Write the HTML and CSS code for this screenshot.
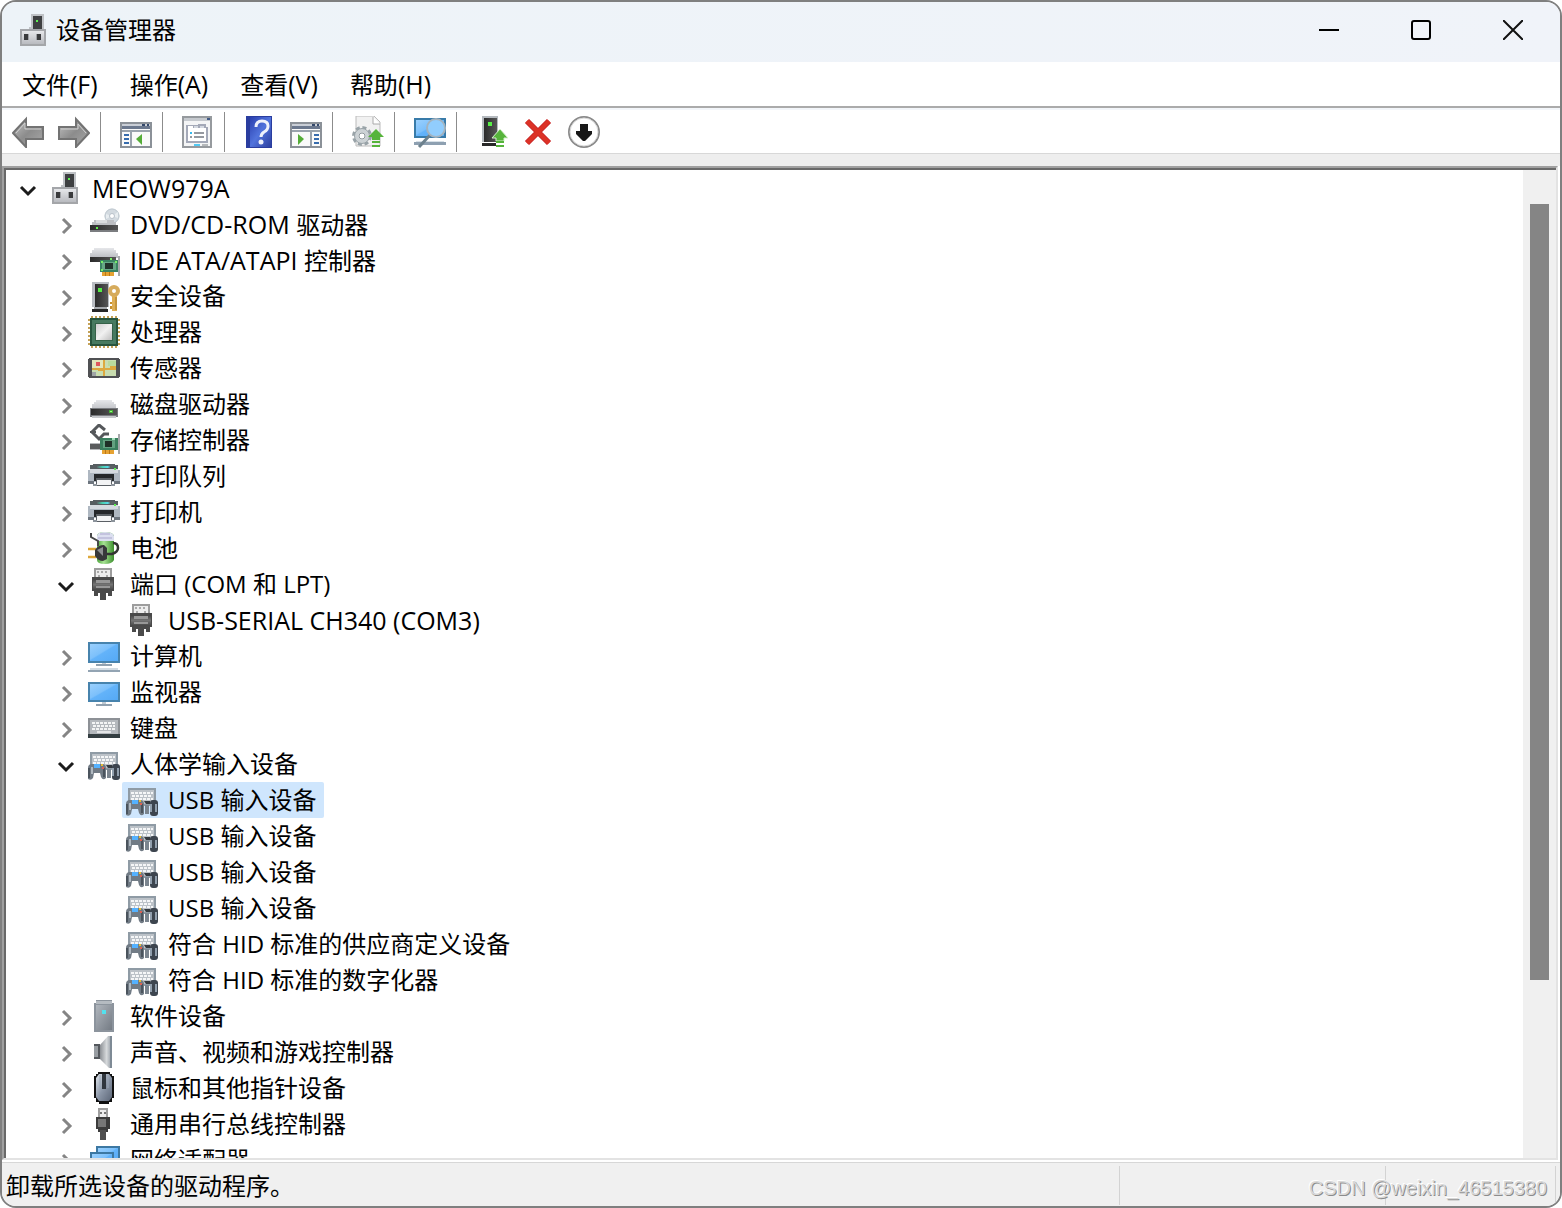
FILE: index.html
```html
<!DOCTYPE html>
<html lang="zh-CN">
<head>
<meta charset="utf-8">
<meta name="viewport" content="width=device-width, initial-scale=1">
<title>设备管理器</title>
<link rel="stylesheet" href="styles.css">
</head>
<body>
<svg class="sprite" aria-hidden="true">
  <defs>
    <linearGradient id="metal" x1="0" y1="0" x2="0" y2="1"><stop offset="0" stop-color="#e6e7ea"/><stop offset="1" stop-color="#b9bbc0"/></linearGradient>
    <linearGradient id="dark" x1="0" y1="0" x2="1" y2="0"><stop offset="0" stop-color="#2b2b2b"/><stop offset="1" stop-color="#565656"/></linearGradient>
    <linearGradient id="screen" x1="0" y1="0" x2="1" y2="1"><stop offset="0" stop-color="#9ad0fd"/><stop offset=".45" stop-color="#7cc0fb"/><stop offset=".5" stop-color="#63b3fa"/><stop offset="1" stop-color="#55a9f5"/></linearGradient>
    <linearGradient id="arrow" x1="0" y1="0" x2="1" y2="1"><stop offset="0" stop-color="#c4c4c4"/><stop offset=".5" stop-color="#8c8c8c"/><stop offset="1" stop-color="#a9a9a9"/></linearGradient>
    <linearGradient id="helpblue" x1="0" y1="0" x2="1" y2="1"><stop offset="0" stop-color="#2a3fae"/><stop offset=".5" stop-color="#5173dc"/><stop offset="1" stop-color="#2c3f9f"/></linearGradient>
    <linearGradient id="die" x1="0" y1="0" x2="1" y2="1"><stop offset="0" stop-color="#cfcfcf"/><stop offset=".5" stop-color="#f1f1f1"/><stop offset="1" stop-color="#bdbdbd"/></linearGradient>
    <linearGradient id="plug" x1="0" y1="0" x2="0" y2="1"><stop offset="0" stop-color="#444"/><stop offset=".5" stop-color="#747474"/><stop offset="1" stop-color="#454545"/></linearGradient>
    <linearGradient id="steel" x1="0" y1="0" x2="1" y2="1"><stop offset="0" stop-color="#b0b6bd"/><stop offset="1" stop-color="#747b84"/></linearGradient>
    <linearGradient id="cone" x1="0" y1="0" x2="1" y2="0"><stop offset="0" stop-color="#8c9095"/><stop offset=".55" stop-color="#d7dadc"/><stop offset="1" stop-color="#8d969f"/></linearGradient>
    <linearGradient id="mouseg" x1="0" y1="0" x2="1" y2="1"><stop offset="0" stop-color="#e1e7ee"/><stop offset=".5" stop-color="#8b96a7"/><stop offset="1" stop-color="#5c6677"/></linearGradient>
    <linearGradient id="lid" x1="0" y1="0" x2="1" y2="0"><stop offset="0" stop-color="#5c6668"/><stop offset=".3" stop-color="#48cfae"/><stop offset=".6" stop-color="#56d8e8"/><stop offset=".75" stop-color="#5b6264"/></linearGradient>
    <linearGradient id="cell" x1="0" y1="0" x2="1" y2="0"><stop offset="0" stop-color="#4da63b"/><stop offset=".4" stop-color="#a7e294"/><stop offset="1" stop-color="#3c8f2d"/></linearGradient>
  </defs>

  <symbol id="i-pc" viewBox="0 0 32 32"><g shape-rendering="crispEdges">
    <path d="M13 0h13v16H11v-3h2z" fill="#bfc2c6"/><path d="M15 2h9v13h-9z" fill="#3e4042"/><path d="M18 6h2v2h-2z" fill="#5df052"/>
    <path d="M2 15h26v17H2z" fill="#a4a6aa"/><path d="M4 17h22v13H4z" fill="url(#metal)"/><path d="M2 30h26v2H2z" fill="#a4a6a9"/>
    <path d="M6 20h4v6H6zM19 20h4v6h-4z" fill="#3a3b3d"/><path d="M10 20h1v6h-1zM18 20h1v6h-1z" fill="#9fa1a5"/></g></symbol>

  <symbol id="i-dvd" viewBox="0 0 32 32">
    <circle cx="24" cy="8" r="7.5" fill="#d3dae0"/><circle cx="24" cy="8" r="7" fill="none" stroke="#c1cad1"/><path d="M24 8l6-4v6zM24 8l-6-2v5z" fill="#e8edf0"/><circle cx="24" cy="8" r="2.5" fill="#fff" stroke="#b8c1c9"/>
    <g shape-rendering="crispEdges"><path d="M6 12h20v2h2v3h2v1H2v-1h2v-3h2z" fill="#bdbfc3"/><path d="M8 12h11v3H8z" fill="#d9dbdd"/><path d="M2 17h28v7H2z" fill="url(#dark)"/><path d="M2 22h28v2H2z" fill="#7b7d80"/><path d="M8 19h2v2H8z" fill="#62f04c"/></g></symbol>

  <symbol id="i-ide" viewBox="0 0 32 32"><g shape-rendering="crispEdges">
    <path d="M6 4h20v2h2v3h2v5H2V9h2V6h2z" fill="url(#metal)"/><path d="M2 13h26v5H2z" fill="url(#dark)"/>
    <path d="M12 16h18v12H12z" fill="#3b8462"/><path d="M14 18h14v8H14z" fill="#66a886"/><path d="M17 19h8v6h-8z" fill="#21332b"/><path d="M13 17h2v2h-2zM27 17h2v2h-2zM13 25h2v2h-2zM22 14h2v2h-2z" fill="#77ee65"/>
    <path d="M14 28h12v4H14z" fill="#e6a232"/><path d="M17 28h1v4h-1zM21 28h1v4h-1z" fill="#bd7815"/><path d="M30 12h2v20h-2z" fill="#a6a8ab"/></g></symbol>

  <symbol id="i-key" viewBox="0 0 32 32"><g shape-rendering="crispEdges">
    <path d="M4 2h17v25H4z" fill="#b9bdc2"/><path d="M7 4h13v23H7z" fill="url(#dark)"/><path d="M10 8h4v4h-4z" fill="#54ec44"/><path d="M4 29h16v3H4z" fill="#272727"/><path d="M6 27h13v2H6z" fill="#a7aaae"/></g>
    <circle cx="26" cy="11" r="4" fill="none" stroke="#d6ab5c" stroke-width="4"/><path d="M24 16h5v15h-5z" fill="#dfaf55"/><path d="M28 17v13" stroke="#a87b27"/><path d="M22 22h2v2h-2zM22 26h2v3h-2z" fill="#c6902d"/></symbol>

  <symbol id="i-cpu" viewBox="0 0 32 32">
    <path d="M3 1h28M3 31h28" stroke="#c5a258" stroke-width="2" stroke-dasharray="2 2"/><path d="M1 3v28M31 3v28" stroke="#c5a258" stroke-width="2" stroke-dasharray="2 2"/>
    <g shape-rendering="crispEdges"><path d="M2 2h28v28H2z" fill="#27543d"/><path d="M4 4h24v24H4z" fill="#477a60"/><path d="M7 7h18v18H7z" fill="#356248"/><path d="M8 8h16v16H8z" fill="url(#die)"/></g></symbol>

  <symbol id="i-sensor" viewBox="0 0 32 32"><g shape-rendering="crispEdges">
    <path d="M1 6h30v20H1zM0 7h32v18H0z" fill="#505154"/><path d="M4 8h24v16H4z" fill="#c9ddb0"/><path d="M4 8h12v8H4z" fill="#e3e8bb"/><path d="M15 8h2v16h-2zM4 16h24v2H4zM22 14h6v2h-6zM10 18h6v1h-6z" fill="#dda93f"/><path d="M8 10h4v4H8z" fill="#df5a5e"/><path d="M4 20h4v4H4z" fill="#a0a5a6"/><path d="M20 9h8v5h-8z" fill="#b9da9d"/></g></symbol>

  <symbol id="i-disk" viewBox="0 0 32 32"><g shape-rendering="crispEdges">
    <path d="M8 12h16v2h2v2h2v4h2v3H2v-3h2v-4h2v-2h2z" fill="url(#metal)"/><path d="M2 20h28v9H2z" fill="#797b7f"/><path d="M3 21h26v6H3z" fill="url(#dark)"/><path d="M21 22h4v3h-4z" fill="#44ad36"/><path d="M22 23h2v1h-2z" fill="#9bff7f"/><path d="M4 28h24v2H4z" fill="#c5c7ca"/></g></symbol>

  <symbol id="i-storage" viewBox="0 0 32 32"><g shape-rendering="crispEdges">
    <path d="M2 19h10v7H2z" fill="#b6b8bb"/><path d="M2 20h10v5H2z" fill="#5a5b5d"/></g>
    <path d="M17 6l-6-5-7 7 7 7 5-5h5" fill="none" stroke="#55585b" stroke-width="3"/><path d="M2 8h6" stroke="#55585b" stroke-width="2"/>
    <g shape-rendering="crispEdges"><path d="M12 14h18v12H12z" fill="#3a7f5e"/><path d="M15 16h12v8H15z" fill="#62a180"/><path d="M17 17h7v6h-7z" fill="#1f3027"/><path d="M24 14h3v2h-3z" fill="#a3dfbb"/><path d="M14 26h12v4H14z" fill="#e6a232"/><path d="M17 26h1v4h-1zM21 26h1v4h-1z" fill="#bd7815"/><path d="M30 10h2v20h-2z" fill="#a6a8ab"/></g></symbol>

  <symbol id="i-printer" viewBox="0 0 32 32"><g shape-rendering="crispEdges">
    <path d="M5 4h22v1h3v6H2V5h3z" fill="#565d61"/><path d="M9 6h18v2H9z" fill="url(#lid)"/><path d="M0 10h32v12H0z" fill="#aeb7c1"/><path d="M2 9h28v4H2z" fill="#d5dae0"/><path d="M26 8h2v2h-2z" fill="#5df052"/>
    <path d="M6 14h20v7H6z" fill="#25282b"/><path d="M8 18h16v8H8z" fill="#5b6065"/><path d="M9 20h14v5H9z" fill="#f3f4f5"/><path d="M0 21h6v3H0zM26 21h6v3h-6z" fill="#6d757e"/><path d="M5 24h4v2H5zM23 24h4v2h-4z" fill="#8c939b"/></g></symbol>

  <symbol id="i-battery" viewBox="0 0 32 32">
    <path d="M9 4q0-4 8-4t9 4v24q-2 4-9 4-8 0-8-4z" fill="url(#cell)"/><path d="M9 4q0-4 8-4t9 4v5H9z" fill="#dcdff0"/><path d="M12 2h10M10 6h14" stroke="#aaa7cc"/>
    <path d="M0 17h8M0 25h8" stroke="#dda73b" stroke-width="2.5"/><path d="M7 18q3-5 9-5l3 3v11l-4 2q-5 0-8-5z" fill="#37383a"/><path d="M9 18l6-3v9z" fill="#8d8f92"/><path d="M19 22h5q6-2 6-6 0-5-5-5" fill="none" stroke="#333" stroke-width="2.5"/><path d="M10 14V9L3 5V1" fill="none" stroke="#484848" stroke-width="2"/></symbol>

  <symbol id="i-port" viewBox="0 0 32 32"><g shape-rendering="crispEdges">
    <path d="M6 0h18v10H6z" fill="#9d9d9d"/><path d="M8 2h14v8H8z" fill="#ededed"/><path d="M9 3h2v2H9zM13 3h2v2h-2zM17 3h2v2h-2zM10 7h2v2h-2zM18 7h2v2h-2z" fill="#aaa"/>
    <path d="M4 9h22v14H4z" fill="#4a4a4a"/><path d="M5 11h20v11H5z" fill="url(#plug)"/><path d="M8 12h14v3H8zM8 18h14v2H8z" fill="#989898"/><path d="M8 22h14v3H8zM6 23h4v5H6zM20 23h4v5h-4zM12 24h6v8h-6z" fill="#4a4a4a"/></g></symbol>

  <symbol id="i-computer" viewBox="0 0 32 32"><g shape-rendering="crispEdges">
    <path d="M0 2h32v21H0z" fill="#4783ad"/><path d="M2 4h28v17H2z" fill="url(#screen)"/><path d="M14 23h4v2h-4z" fill="#c2cbd2"/><path d="M8 24h16v2H8z" fill="#91a1af"/><path d="M2 28h28v2H2z" fill="#d3dce3"/><path d="M0 30h32v2H0z" fill="#93a4b3"/></g></symbol>

  <symbol id="i-monitor" viewBox="0 0 32 32"><g shape-rendering="crispEdges">
    <path d="M0 6h32v20H0z" fill="#4783ad"/><path d="M2 8h28v16H2z" fill="url(#screen)"/><path d="M14 26h4v2h-4z" fill="#c2cbd2"/><path d="M8 28h16v2H8z" fill="#91a1af"/></g></symbol>

  <symbol id="i-keyboard" viewBox="0 0 32 32">
    <g shape-rendering="crispEdges"><path d="M0 6h32v17H0z" fill="#8d9196"/><path d="M2 8h28v14H2z" fill="#b4b8bd"/><path d="M0 22h32v4H0z" fill="#343e42"/></g>
    <path d="M4 11h24M5 14h22M4 17h24" stroke="#f3f4f5" stroke-width="2" stroke-dasharray="3 1"/><path d="M9 20h14" stroke="#e5e6e8" stroke-width="2"/></symbol>

  <symbol id="i-hid" viewBox="0 0 32 32">
    <g shape-rendering="crispEdges"><path d="M2 4h28v18H2z" fill="#8f9ba5"/><path d="M4 6h24v14H4z" fill="#bcc2c8"/></g>
    <path d="M5 9h22M6 12h20M5 15h22" stroke="#f5f6f7" stroke-width="2" stroke-dasharray="3 1"/>
    <path d="M0 20q0-4 4-4h10q4 0 4 4v10q-3 3-5-1l-1-4H6l-1 5q-2 3-5 1z" fill="#717b85"/><path d="M0 20h2v10H0zM15 20h2v9h-2z" fill="#4b545d"/><path d="M3 19h2v7H3z" fill="#b0b9c1"/><path d="M6 16h6v4H6z" fill="#55b2ff"/><path d="M13 16h2v2h-2z" fill="#e7bd36"/><path d="M14 19h2v2h-2z" fill="#dc6154"/>
    <path d="M18 17h6v3h-4z" fill="#353a3f"/><path d="M19 21h4v9h-4z" fill="#7b858f"/><rect x="24" y="16" width="8" height="16" rx="3" fill="#3d454f"/><path d="M25 20v8M30 20v8" stroke="#92a0ae" stroke-width="2"/></symbol>

  <symbol id="i-software" viewBox="0 0 32 32"><g shape-rendering="crispEdges">
    <path d="M8 0h16v3h2v29H6V3h2z" fill="#8c949d"/><path d="M8 1h16v3H8z" fill="#b5bbc1"/><path d="M8 5h16v25H8z" fill="url(#steel)"/><path d="M14 10h4v4h-4z" fill="#53e1ee"/></g></symbol>

  <symbol id="i-sound" viewBox="0 0 32 32">
    <path d="M20 0h4v32h-3L12 23V9z" fill="url(#cone)"/><path d="M6 8h6v15H6z" fill="#54585d"/><path d="M6 10h4v11H6z" fill="#989da2"/><path d="M22 0h2v32h-2z" fill="#7e8a95"/></symbol>

  <symbol id="i-mouse" viewBox="0 0 32 32">
    <path d="M10 0h12v2h2v2h2v22h-2v4h-3v2H11v-2H8v-4H6V4h2V2h2z" fill="#111"/><path d="M11 2h10l3 4v19l-3 4H11l-3-4V6z" fill="url(#mouseg)"/><path d="M14 2h4v15h-4z" fill="#2f353d"/><path d="M12 3v13M20 3v13" stroke="#9aa6b6" stroke-width="1"/></symbol>

  <symbol id="i-usb" viewBox="0 0 32 32"><g shape-rendering="crispEdges">
    <path d="M10 0h10v10H10z" fill="#9f9f9f"/><path d="M12 2h6v8h-6z" fill="#ededed"/><path d="M12 4h2v2h-2zM16 4h2v2h-2z" fill="#777"/><path d="M8 9h14v12h-2v3H10v-3H8z" fill="#3c3c3c"/><path d="M10 11h8v8h-8z" fill="#777"/><path d="M12 22h6v10h-6z" fill="#4f4f4f"/></g></symbol>

  <symbol id="i-network" viewBox="0 0 32 32"><g shape-rendering="crispEdges">
    <path d="M8 2h24v18H8z" fill="#3d78a2"/><path d="M10 4h20v14H10z" fill="url(#screen)"/><path d="M2 8h24v18H2z" fill="#3d78a2"/><path d="M4 10h20v14H4z" fill="url(#screen)"/></g></symbol>

  <symbol id="t-back" viewBox="0 0 32 32"><path d="M1 17L14 3v8h17v12H14v8z" fill="url(#arrow)" stroke="#737373" stroke-width="2"/><path d="M4 17l9-10v6h16" fill="none" stroke="#d0d0d0" stroke-width="1"/></symbol>
  <symbol id="t-forward" viewBox="0 0 32 32"><path d="M31 17L18 3v8H1v12h17v8z" fill="url(#arrow)" stroke="#737373" stroke-width="2"/><path d="M3 13h17V8l8 9" fill="none" stroke="#d0d0d0" stroke-width="1"/></symbol>
  <symbol id="t-tree" viewBox="0 0 32 32"><g shape-rendering="crispEdges"><path d="M0 6h32v26H0z" fill="#8b9198"/><path d="M2 8h28v22H2z" fill="#fafafa"/><path d="M2 8h28v2H2z" fill="#c9ced6"/><path d="M2 10h28v3H2z" fill="#6b788e"/><path d="M22 8h3v2h-3zM27 8h2v2h-2z" fill="#34486b"/><path d="M2 14h28v2H2zM10 16h2v14h-2z" fill="#9aa3ad"/><path d="M4 18h5v2H4zM4 22h5v2H4zM4 26h5v2H4z" fill="#386dae"/></g><path d="M22 18v11l-6-6z" fill="#55ad38"/></symbol>
  <symbol id="t-action" viewBox="0 0 32 32"><g shape-rendering="crispEdges"><path d="M0 6h32v26H0z" fill="#8b9198"/><path d="M2 8h28v22H2z" fill="#fafafa"/><path d="M2 8h28v2H2z" fill="#c9ced6"/><path d="M2 10h28v3H2z" fill="#6b788e"/><path d="M22 8h3v2h-3zM27 8h2v2h-2z" fill="#34486b"/><path d="M2 14h28v2H2zM20 16h2v14h-2z" fill="#9aa3ad"/><path d="M24 18h5v2h-5zM24 22h5v2h-5zM24 26h5v2h-5z" fill="#386dae"/></g><path d="M8 18v11l6-6z" fill="#55ad38"/></symbol>
  <symbol id="t-props" viewBox="1 0 32 32"><g shape-rendering="crispEdges"><path d="M1 0h30v32H1z" fill="#969a9e"/><path d="M3 2h26v28H3z" fill="#f4f5f6"/><path d="M3 2h26v3H3z" fill="#c6cacf"/><path d="M26 2h3v2h-3z" fill="#405984"/><path d="M5 9h12V8h8v3h2v16H5z" fill="#a4a9b8"/><path d="M7 12h18v13H7zM7 10h5v2H7z" fill="#fff"/><path d="M13 10h4v2h-4zM19 10h4v2h-4z" fill="#d5dae2"/><path d="M9 16h2v2H9z" fill="#35b9ee"/><path d="M13 16h10v2H13zM13 20h10v2H13zM9 20h2v2H9z" fill="#9599a0"/><path d="M13 28h6v2h-6z" fill="#53c8f2"/><path d="M21 28h6v2h-6z" fill="#b6b9bc"/></g></symbol>
  <symbol id="t-help" viewBox="0 0 32 32"><path d="M2 0h26v32H2z" fill="#2a3d9f"/><path d="M6 1h21v30H6z" fill="url(#helpblue)"/><path d="M12 11q0-6 6-6t6 5q0 4-4 6-3 2-3 5" fill="none" stroke="#eef1fb" stroke-width="3"/><circle cx="17" cy="26" r="2.5" fill="#eef1fb"/></symbol>
  <symbol id="t-update" viewBox="0 0 32 32"><path d="M4 0h18l6 6v24H4z" fill="#f1f1f1" stroke="#bbb"/><path d="M21 1v7h7" fill="#fff" stroke="#aaa"/><circle cx="10" cy="20" r="8.5" fill="none" stroke="#99a3a8" stroke-width="3" stroke-dasharray="4 2.7"/><circle cx="10" cy="20" r="5.5" fill="#e7eaeb" stroke="#ccd2d5" stroke-width="4"/><circle cx="10" cy="20" r="7.5" fill="none" stroke="#99a3a8"/><circle cx="10" cy="20" r="3" fill="#fff" stroke="#8e979c"/><path d="M24 13l8 8h-4v3h-8v-3h-4z" fill="#56b43b"/><path d="M20 25h8v2h-8zM20 29h8v2h-8z" fill="#56b43b"/></symbol>
  <symbol id="t-scan" viewBox="0 0 32 32"><path d="M0 2h32v20H0z" fill="#387ba9"/><path d="M2 4h28v16H2z" fill="url(#screen)"/><path d="M0 26h32v3H0z" fill="#8ea0b1"/><path d="M2 25h28v1H2z" fill="#d7e0e7"/><path d="M5 31l11-12" stroke="#6d818d" stroke-width="3"/><circle cx="22" cy="12" r="9" fill="#91cdfd" stroke="#a3b3bf" stroke-width="2"/></symbol>
  <symbol id="t-enable" viewBox="0 0 32 32"><path d="M6 0h16v26H6z" fill="#b5babf"/><path d="M8 2h13v24H8z" fill="url(#dark)"/><path d="M12 6h4v4h-4z" fill="#58ef46"/><path d="M6 27h14v3H6z" fill="#282828"/><path d="M24 13l8 9h-4v3h-8v-3h-4z" fill="#56b43b" stroke="#d7f0cf" stroke-width="1"/><path d="M20 25h8v2h-8zM20 29h8v2h-8z" fill="#56b43b"/></symbol>
  <symbol id="t-remove" viewBox="0 0 32 32"><path d="M5 5l22 22M27 5L5 27" stroke="#c9272a" stroke-width="6"/><path d="M5 5l22 22M27 5L5 27" stroke="#dc3226" stroke-width="4"/></symbol>
  <symbol id="t-disable" viewBox="0 0 32 32"><circle cx="16" cy="16" r="15" fill="#fff" stroke="#8a8a8a" stroke-width="2"/><circle cx="16" cy="16" r="14" fill="none" stroke="#d9d9d9"/><path d="M12 8h8v7h4v3l-7 7h-2l-7-7v-3h4z" fill="#181818"/></symbol>
  <symbol id="c-closed" viewBox="0 0 18 18"><path d="M6 2l7 7-7 7" fill="none" stroke="#858585" stroke-width="3"/></symbol>
  <symbol id="c-open" viewBox="0 0 18 18"><path d="M2 6l7 7 7-7" fill="none" stroke="#1c1c1c" stroke-width="3"/></symbol>
</svg>

<main class="window">
  <header class="titlebar">
    <svg class="icon"><use href="#i-pc"/></svg>
    <h1 class="title">设备管理器</h1>
    <div class="controls">
      <button type="button" aria-label="最小化"><svg viewBox="0 0 20 20"><path d="M0 10h20" stroke="#000" stroke-width="2"/></svg></button>
      <button type="button" aria-label="最大化"><svg viewBox="0 0 20 20"><rect x="1" y="1" width="18" height="18" rx="2" fill="none" stroke="#000" stroke-width="2"/></svg></button>
      <button type="button" aria-label="关闭"><svg viewBox="0 0 20 20"><path d="M0 0l20 20M20 0L0 20" stroke="#111" stroke-width="2"/></svg></button>
    </div>
  </header>

  <nav class="menubar">
    <button type="button">文件<span class="latin">(F)</span></button>
    <button type="button">操作<span class="latin">(A)</span></button>
    <button type="button">查看<span class="latin">(V)</span></button>
    <button type="button">帮助<span class="latin">(H)</span></button>
  </nav>

  <div class="toolbar">
    <button type="button" aria-label="后退"><svg class="icon"><use href="#t-back"/></svg></button>
    <button type="button" aria-label="前进"><svg class="icon"><use href="#t-forward"/></svg></button>
    <span class="sep"></span>
    <button type="button" aria-label="显示控制台树"><svg class="icon"><use href="#t-tree"/></svg></button>
    <span class="sep"></span>
    <button type="button" aria-label="属性"><svg class="icon"><use href="#t-props"/></svg></button>
    <span class="sep"></span>
    <button type="button" aria-label="帮助"><svg class="icon"><use href="#t-help"/></svg></button>
    <button type="button" aria-label="显示操作窗格"><svg class="icon"><use href="#t-action"/></svg></button>
    <span class="sep"></span>
    <button type="button" aria-label="更新驱动程序"><svg class="icon"><use href="#t-update"/></svg></button>
    <span class="sep"></span>
    <button type="button" aria-label="扫描检测硬件改动"><svg class="icon"><use href="#t-scan"/></svg></button>
    <span class="sep"></span>
    <button type="button" aria-label="启用设备"><svg class="icon"><use href="#t-enable"/></svg></button>
    <button type="button" aria-label="卸载设备"><svg class="icon"><use href="#t-remove"/></svg></button>
    <button type="button" aria-label="禁用设备"><svg class="icon"><use href="#t-disable"/></svg></button>
  </div>

  <section class="panel">
    <ul class="tree">
      <li>
        <div class="row"><button type="button" class="toggle" aria-label="折叠"><svg><use href="#c-open"/></svg></button><span class="entry"><svg class="icon"><use href="#i-pc"/></svg><span class="latin">MEOW979A</span></span></div>
        <ul>
          <li><div class="row"><button type="button" class="toggle" aria-label="展开"><svg><use href="#c-closed"/></svg></button><span class="entry"><svg class="icon"><use href="#i-dvd"/></svg><span><span class="latin">DVD/CD-ROM </span>驱动器</span></span></div></li>
          <li><div class="row"><button type="button" class="toggle" aria-label="展开"><svg><use href="#c-closed"/></svg></button><span class="entry"><svg class="icon"><use href="#i-ide"/></svg><span><span class="latin">IDE ATA/ATAPI </span>控制器</span></span></div></li>
          <li><div class="row"><button type="button" class="toggle" aria-label="展开"><svg><use href="#c-closed"/></svg></button><span class="entry"><svg class="icon"><use href="#i-key"/></svg>安全设备</span></div></li>
          <li><div class="row"><button type="button" class="toggle" aria-label="展开"><svg><use href="#c-closed"/></svg></button><span class="entry"><svg class="icon"><use href="#i-cpu"/></svg>处理器</span></div></li>
          <li><div class="row"><button type="button" class="toggle" aria-label="展开"><svg><use href="#c-closed"/></svg></button><span class="entry"><svg class="icon"><use href="#i-sensor"/></svg>传感器</span></div></li>
          <li><div class="row"><button type="button" class="toggle" aria-label="展开"><svg><use href="#c-closed"/></svg></button><span class="entry"><svg class="icon"><use href="#i-disk"/></svg>磁盘驱动器</span></div></li>
          <li><div class="row"><button type="button" class="toggle" aria-label="展开"><svg><use href="#c-closed"/></svg></button><span class="entry"><svg class="icon"><use href="#i-storage"/></svg>存储控制器</span></div></li>
          <li><div class="row"><button type="button" class="toggle" aria-label="展开"><svg><use href="#c-closed"/></svg></button><span class="entry"><svg class="icon"><use href="#i-printer"/></svg>打印队列</span></div></li>
          <li><div class="row"><button type="button" class="toggle" aria-label="展开"><svg><use href="#c-closed"/></svg></button><span class="entry"><svg class="icon"><use href="#i-printer"/></svg>打印机</span></div></li>
          <li><div class="row"><button type="button" class="toggle" aria-label="展开"><svg><use href="#c-closed"/></svg></button><span class="entry"><svg class="icon"><use href="#i-battery"/></svg>电池</span></div></li>
          <li>
            <div class="row"><button type="button" class="toggle" aria-label="折叠"><svg><use href="#c-open"/></svg></button><span class="entry"><svg class="icon"><use href="#i-port"/></svg>端口 (COM 和 LPT)</span></div>
            <ul>
              <li><div class="row leaf"><span class="entry"><svg class="icon"><use href="#i-port"/></svg><span class="latin">USB-SERIAL CH340 (COM3)</span></span></div></li>
            </ul>
          </li>
          <li><div class="row"><button type="button" class="toggle" aria-label="展开"><svg><use href="#c-closed"/></svg></button><span class="entry"><svg class="icon"><use href="#i-computer"/></svg>计算机</span></div></li>
          <li><div class="row"><button type="button" class="toggle" aria-label="展开"><svg><use href="#c-closed"/></svg></button><span class="entry"><svg class="icon"><use href="#i-monitor"/></svg>监视器</span></div></li>
          <li><div class="row"><button type="button" class="toggle" aria-label="展开"><svg><use href="#c-closed"/></svg></button><span class="entry"><svg class="icon"><use href="#i-keyboard"/></svg>键盘</span></div></li>
          <li>
            <div class="row"><button type="button" class="toggle" aria-label="折叠"><svg><use href="#c-open"/></svg></button><span class="entry"><svg class="icon"><use href="#i-hid"/></svg>人体学输入设备</span></div>
            <ul>
              <li><div class="row leaf"><span class="entry selected"><svg class="icon"><use href="#i-hid"/></svg>USB 输入设备</span></div></li>
              <li><div class="row leaf"><span class="entry"><svg class="icon"><use href="#i-hid"/></svg>USB 输入设备</span></div></li>
              <li><div class="row leaf"><span class="entry"><svg class="icon"><use href="#i-hid"/></svg>USB 输入设备</span></div></li>
              <li><div class="row leaf"><span class="entry"><svg class="icon"><use href="#i-hid"/></svg>USB 输入设备</span></div></li>
              <li><div class="row leaf"><span class="entry"><svg class="icon"><use href="#i-hid"/></svg>符合 HID 标准的供应商定义设备</span></div></li>
              <li><div class="row leaf"><span class="entry"><svg class="icon"><use href="#i-hid"/></svg>符合 HID 标准的数字化器</span></div></li>
            </ul>
          </li>
          <li><div class="row"><button type="button" class="toggle" aria-label="展开"><svg><use href="#c-closed"/></svg></button><span class="entry"><svg class="icon"><use href="#i-software"/></svg>软件设备</span></div></li>
          <li><div class="row"><button type="button" class="toggle" aria-label="展开"><svg><use href="#c-closed"/></svg></button><span class="entry"><svg class="icon"><use href="#i-sound"/></svg>声音、视频和游戏控制器</span></div></li>
          <li><div class="row"><button type="button" class="toggle" aria-label="展开"><svg><use href="#c-closed"/></svg></button><span class="entry"><svg class="icon"><use href="#i-mouse"/></svg>鼠标和其他指针设备</span></div></li>
          <li><div class="row"><button type="button" class="toggle" aria-label="展开"><svg><use href="#c-closed"/></svg></button><span class="entry"><svg class="icon"><use href="#i-usb"/></svg>通用串行总线控制器</span></div></li>
          <li><div class="row"><button type="button" class="toggle" aria-label="展开"><svg><use href="#c-closed"/></svg></button><span class="entry"><svg class="icon"><use href="#i-network"/></svg>网络适配器</span></div></li>
        </ul>
      </li>
    </ul>
    <div class="scrollbar"><div class="thumb"></div><div class="rest"></div></div>
  </section>

  <footer class="statusbar">
    <span class="cell message">卸载所选设备的驱动程序。</span>
    <span class="cell middle"></span>
    <span class="cell end"></span>
  </footer>
  <span class="watermark">CSDN @weixin_46515380</span>
</main>
</body>
</html>
```
FILE: styles.css
```css
* {
  box-sizing: border-box;
}

body {
  margin: 0;
  background: #fff;
  color: #000;
  font: 400 24px/36px "Open Sans", "Noto Sans CJK SC", sans-serif;
}

button {
  padding: 0;
  border: 0;
  background: none;
  color: inherit;
  font: inherit;
}

ul {
  margin: 0;
  padding: 0;
  list-style: none;
}

.sprite {
  position: absolute;
  width: 0;
  height: 0;
}

.icon {
  flex: none;
  display: block;
  width: 32px;
  height: 32px;
}

.latin {
  font-size: 25px;
}

.window {
  position: relative;
  display: flex;
  flex-direction: column;
  height: 100vh;
  overflow: hidden;
  border: 2px solid #7f7f7f;
  border-radius: 16px;
  background: #fff;
}

.titlebar {
  flex: none;
  display: flex;
  align-items: center;
  height: 60px;
  padding: 0 1px 4px 16px;
  background: linear-gradient(90deg, #edf3f8, #f0f3f9);
}

.title {
  flex: 1;
  margin: 0 0 0 6px;
  font-size: 24px;
  font-weight: inherit;
}

.controls {
  display: flex;
  align-self: stretch;
}

.controls button {
  display: grid;
  place-items: center;
  width: 92px;
}

.controls svg {
  width: 20px;
  height: 20px;
}

.menubar {
  flex: none;
  display: flex;
  height: 46px;
  padding: 0 4px;
  border-bottom: 2px solid #ababab;
}

.menubar button {
  padding: 0 16px;
}

.toolbar {
  flex: none;
  display: flex;
  margin-bottom: 12px;
  padding: 2px 3px 1px;
  border-top: 2px solid #f3f6fa;
  border-bottom: 1px solid #d8d8d8;
  box-shadow: 0 12px 0 #eee;
}

.toolbar button {
  display: grid;
  place-items: center;
  width: 46px;
  height: 40px;
}

.sep {
  width: 1px;
  margin: 0 12px 0 3px;
  background: #8c8c8c;
}

.panel {
  flex: 1;
  display: flex;
  min-height: 0;
  margin-right: 2px;
  padding: 2px 0 0 2px;
  border: 2px solid;
  border-color: #a0a0a0 #e3e3e3 #e3e3e3 #a0a0a0;
  background: #696969;
}

.tree {
  flex: 1;
  overflow: hidden;
  padding-left: 4px;
  background: #fff;
}

.tree ul {
  padding-left: 38px;
}

.row {
  display: flex;
  height: 36px;
}

.row.leaf {
  padding-left: 36px;
}

.toggle {
  display: grid;
  place-items: center;
  width: 36px;
  padding-top: 4px;
}

.toggle svg {
  width: 18px;
  height: 18px;
}

.entry {
  display: flex;
  align-items: center;
  gap: 10px;
  padding: 0 8px 0 4px;
  border-radius: 2px;
  white-space: nowrap;
}

.entry.selected {
  background: #cfe6fd;
}

.scrollbar {
  flex: none;
  display: flex;
  flex-direction: column;
  width: 33px;
  padding: 34px 7px;
  background: #f0f0f0;
}

.thumb {
  flex: 776;
  background: #858585;
}

.rest {
  flex: 144;
}

.statusbar {
  flex: none;
  display: flex;
  height: 44px;
  margin-top: 2px;
  padding: 3px 4px 1px;
  border-top: 1px solid #d7d7d7;
  background: #f0f0f0;
}

.cell {
  border-right: 1px solid #d3d3d3;
}

.message {
  flex: 1;
  line-height: 40px;
}

.middle {
  width: 266px;
}

.end {
  width: 170px;
}

.watermark {
  position: absolute;
  right: 13px;
  bottom: 6px;
  color: #d8d8d8;
  font: 20px/24px "Liberation Sans", sans-serif;
  text-shadow: 1px 1px 0 #8c8c8c, -1px -1px 0 #fff;
}
```
